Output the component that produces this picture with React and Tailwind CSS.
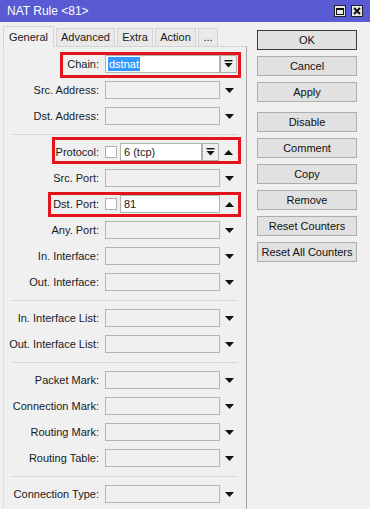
import React from 'react';

const Arrow = ({ up }) => (
  <svg width="9" height="5" viewBox="0 0 9 5">
    {up ? <polygon points="0,5 9,5 4.5,0" fill="#111" /> : <polygon points="0,0 9,0 4.5,5" fill="#111" />}
  </svg>
);

const DropButton = () => (
  <div className="w-[17px] h-[18px] border border-[#acacac] bg-[#f0f0f0] flex items-center justify-center">
    <svg width="9" height="8" viewBox="0 0 9 8">
      <rect x="0.5" y="0" width="8" height="1.4" fill="#111" />
      <polygon points="0.5,3 8.5,3 4.5,7.5" fill="#111" />
    </svg>
  </div>
);

const Row = ({ label, children }) => (
  <div className="relative flex h-[26px] items-center">
    <div className="w-[96px] text-right pr-px">{label}</div>
    <div className="ml-[5px] flex items-center">{children}</div>
  </div>
);

const EmptyField = () => (
  <>
    <div className="w-[115px] h-[18px] border border-[#b4b4b4] bg-[#f0f0f0]" />
    <div className="w-[18px] flex justify-center">
      <Arrow />
    </div>
  </>
);

const CheckBox = () => <div className="w-[12px] h-[12px] border border-[#b0b0b0] bg-white mr-[3px]" />;

const Separator = () => (
  <div className="h-[10px] flex items-center pl-[8px] pr-[8px]">
    <div className="h-px w-full bg-[#d7d7d7]" />
  </div>
);

const RedBox = ({ className }) => (
  <div className={`absolute border-[3px] border-[#e3141b] pointer-events-none ${className}`} />
);

const Button = ({ children, main }) => (
  <div
    className={`w-[100px] h-[20px] flex items-center justify-center bg-[#e1e1e1] border ${
      main ? 'border-[#3c3c3c]' : 'border-[#adadad]'
    }`}
  >
    {children}
  </div>
);

const tabs = ['Advanced', 'Extra', 'Action', '...'];
const tabWidths = ['w-[59px]', 'w-[36px]', 'w-[41px]', 'w-[20px]'];

export default function App() {
  return (
    <div className="w-[370px] h-[509px] overflow-hidden bg-[#f0f0f0] text-[11px] text-[#1a1a1a] font-['Liberation_Sans',Arial,sans-serif]">
      {/* Title bar */}
      <div className="h-[22px] bg-[#5a5ad4] flex items-center justify-between pl-[7px] pr-[7px]">
        <span className="text-white text-[12px]">NAT Rule &lt;81&gt;</span>
        <div className="flex gap-[5px]">
          <div className="w-[12px] h-[12px] bg-[#e8e8e8] border border-[#222] flex items-center justify-center">
            <div className="w-[8px] h-[7px] border border-[#111] border-t-2" />
          </div>
          <div className="w-[12px] h-[12px] bg-[#e8e8e8] border border-[#222] flex items-center justify-center">
            <svg width="8" height="8" viewBox="0 0 8 8">
              <path d="M1 1 L7 7 M7 1 L1 7" stroke="#111" strokeWidth="2" />
            </svg>
          </div>
        </div>
      </div>

      <div className="flex">
        {/* Left side */}
        <div className="w-[247px] pl-[3px]">
          <div className="h-[24px] flex items-end">
            <div className="w-[51px] h-[21px] bg-[#f0f0f0] border border-b-0 border-[#d4d4d4] flex items-center justify-center relative z-10 -mb-px">
              General
            </div>
            {tabs.map((t, i) => (
              <div
                key={t}
                className={`${tabWidths[i]} h-[18px] ml-[2px] bg-[#e9e9e9] border border-b-0 border-[#d4d4d4] flex items-center justify-center`}
              >
                {t}
              </div>
            ))}
          </div>

          <div className="h-[470px] border-t border-l border-r border-t-[#d4d4d4] border-l-[#dcdcdc] border-r-[#a3a3a3] pt-[4px]">
            <Row label="Chain:">
              <div className="w-[115px] h-[18px] border border-[#b4b4b4] bg-white flex items-center pl-[2px]">
                <span className="bg-[#3399ff] text-white px-px leading-[14px]">dstnat</span>
              </div>
              <DropButton />
              <RedBox className="left-[56px] top-[1px] w-[181px] h-[26px]" />
            </Row>
            <Row label="Src. Address:">
              <EmptyField />
            </Row>
            <Row label="Dst. Address:">
              <EmptyField />
            </Row>
            <Separator />
            <Row label="Protocol:">
              <CheckBox />
              <div className="w-[82px] h-[18px] border border-[#b4b4b4] bg-white flex items-center pl-[3px]">6 (tcp)</div>
              <DropButton />
              <div className="w-[18px] flex justify-center">
                <Arrow up />
              </div>
              <RedBox className="left-[48px] -top-[2px] w-[189px] h-[27px]" />
            </Row>
            <Row label="Src. Port:">
              <EmptyField />
            </Row>
            <Row label="Dst. Port:">
              <CheckBox />
              <div className="w-[100px] h-[18px] border border-[#b4b4b4] bg-white flex items-center pl-[3px]">81</div>
              <div className="w-[18px] flex justify-center">
                <Arrow up />
              </div>
              <RedBox className="left-[44px] top-[1px] w-[193px] h-[25px]" />
            </Row>
            <Row label="Any. Port:">
              <EmptyField />
            </Row>
            <Row label="In. Interface:">
              <EmptyField />
            </Row>
            <Row label="Out. Interface:">
              <EmptyField />
            </Row>
            <Separator />
            <Row label="In. Interface List:">
              <EmptyField />
            </Row>
            <Row label="Out. Interface List:">
              <EmptyField />
            </Row>
            <Separator />
            <Row label="Packet Mark:">
              <EmptyField />
            </Row>
            <Row label="Connection Mark:">
              <EmptyField />
            </Row>
            <Row label="Routing Mark:">
              <EmptyField />
            </Row>
            <Row label="Routing Table:">
              <EmptyField />
            </Row>
            <Separator />
            <Row label="Connection Type:">
              <EmptyField />
            </Row>
          </div>
        </div>

        {/* Right side buttons */}
        <div className="pl-[10px] pt-[8px] flex flex-col gap-[6px] text-[#111]">
          <Button main>OK</Button>
          <Button>Cancel</Button>
          <Button>Apply</Button>
          <div className="h-[4px] -my-[3px]" />
          <Button>Disable</Button>
          <Button>Comment</Button>
          <Button>Copy</Button>
          <Button>Remove</Button>
          <Button>Reset Counters</Button>
          <Button>Reset All Counters</Button>
        </div>
      </div>
    </div>
  );
}
